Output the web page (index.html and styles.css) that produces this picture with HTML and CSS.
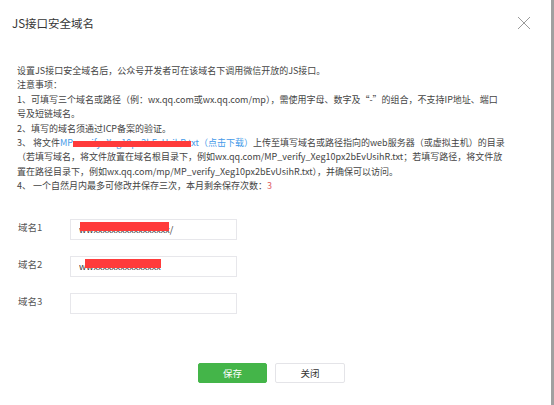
FILE: index.html
```html
<!DOCTYPE html>
<html>
	<head>
		<meta charset="UTF-8">
		<title>JS接口安全域名</title>
		<link rel="stylesheet" href="styles.css">
	</head>
	<body>
		<div class="dialog">
			<div class="hd">
				<h3>JS接口安全域名</h3>
				<a href="javascript:;" class="close">
					<svg width="14" height="14" viewBox="0 0 14 14"><path d="M1 1L13 13M13 1L1 13" stroke="#9a9a9a" stroke-width="1" fill="none"/></svg>
				</a>
			</div>
			<div class="bd">
				<div class="tips">
					<p>设置JS接口安全域名后，公众号开发者可在该域名下调用微信开放的JS接口。</p>
					<p>注意事项：</p>
					<p>1、可填写三个域名或路径（例：wx.qq.com或wx.qq.com/mp），需使用字母、数字及“-”的组合，不支持IP地址、端口<br>号及短链域名。</p>
					<p>2、填写的域名须通过ICP备案的验证。</p>
					<p>3、 将文件<a href="javascript:;" class="link">MP_verify_Xeg10px2bEvUsihR.txt<span class="mask mask-link"></span></a><a href="javascript:;" class="link">（点击下载）</a>上传至填写域名或路径指向的web服务器（或虚拟主机）的目录<br>（若填写域名，将文件放置在域名根目录下，例如wx.qq.com/MP_verify_Xeg10px2bEvUsihR.txt；若填写路径，将文件放<br>置在路径目录下，例如wx.qq.com/mp/MP_verify_Xeg10px2bEvUsihR.txt），并确保可以访问。</p>
					<p>4、 一个自然月内最多可修改并保存三次，本月剩余保存次数：<span class="num">3</span></p>
				</div>
				<div class="form">
					<div class="row">
						<label>域名1</label>
						<div class="field">
							<input type="text" value="wwxxxxxxxxxxxxxxxxx/">
							<span class="mask mask-1"></span>
						</div>
					</div>
					<div class="row">
						<label>域名2</label>
						<div class="field">
							<input type="text" value="wwxxxxxxxxxxxxxxx">
							<span class="mask mask-2"></span>
						</div>
					</div>
					<div class="row">
						<label>域名3</label>
						<div class="field">
							<input type="text" value="">
						</div>
					</div>
				</div>
			</div>
			<div class="ft">
				<a href="javascript:;" class="btn btn-primary">保存</a>
				<a href="javascript:;" class="btn">关闭</a>
			</div>
		</div>
	</body>
</html>
```

FILE: styles.css
```css
*{margin: 0;padding: 0;box-sizing: border-box;}
body{background: #fff;font-family: "Noto Sans CJK SC", "Microsoft YaHei", sans-serif;color: #444;}
a{text-decoration: none;}
.dialog{width: 554px;height: 405px;background: #fff;border-right: 3px solid #a0a0a0;}
.hd{height: 46px;display: flex;align-items: center;justify-content: space-between;padding: 0 20px 0 12px;}
.hd h3{font-size: 11.5px;font-weight: normal;color: #353535;}
.close{display: flex;}
.bd{padding: 18px 4px 0 17px;}
.tips{font-size: 9px;line-height: 14.4px;color: #444;white-space: nowrap;}
.tips .link{color: #459ae9;position: relative;}
.tips .num{color: #e15f63;}
.mask{position: absolute;background: #ff3b3b;height: 6px;}
.mask-link{left: 13px;top: 5px;width: 118px;}
.form{margin-top: 23px;display: flex;flex-direction: column;gap: 16px;}
.row{display: flex;align-items: center;height: 21px;}
.row label{width: 53px;padding-left: 1px;font-size: 9.5px;color: #555;}
.field{position: relative;}
.field input{width: 167px;height: 21px;border: 1px solid #e7e7eb;padding: 0 8px;font-size: 9px;font-family: inherit;color: #333;outline: none;}
.mask-1{left: 10px;top: 8px;width: 89px;height: 9px;}
.mask-2{left: 15px;top: 8px;width: 76px;height: 9px;}
.ft{display: flex;justify-content: center;gap: 8px;padding-right: 8px;margin-top: 51px;}
.btn{width: 70px;height: 20px;line-height: 18px;text-align: center;font-size: 9.5px;color: #333;background: #fff;border: 1px solid #e4e4e8;border-radius: 2px;}
.btn-primary{width: 69px;background: #44b549;border-color: #44b549;color: #fff;}
```
